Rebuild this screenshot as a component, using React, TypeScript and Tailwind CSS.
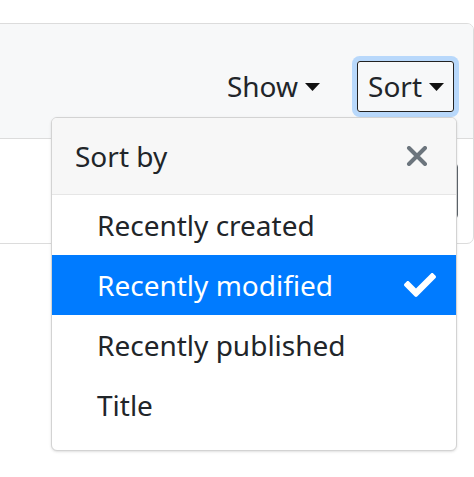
import React from "react";

const font = { fontFamily: '"Noto Sans", "Open Sans", Arial, sans-serif' };

const Caret = () => (
  <svg width="15" height="8" viewBox="0 0 15 8" className="ml-[7px] mt-[2px]">
    <path d="M0 0h15L7.5 8z" fill="#111" />
  </svg>
);

const Check = () => (
  <svg width="32" height="26" viewBox="0 0 512 400" fill="#fff">
    <path d="M173.9 383.4l-166.4-166.4c-10-10-10-26.2 0-36.2l36.2-36.2c10-10 26.2-10 36.2 0L192 256.7 432.1 16.6c10-10 26.2-10 36.2 0l36.2 36.2c10 10 10 26.2 0 36.2l-294.4 294.4c-10 10-26.2 10-36.2 0z" />
  </svg>
);

const Close = () => (
  <svg width="22" height="20" viewBox="0 0 22 20">
    <path d="M3 2l16 16M19 2L3 18" stroke="#6c757d" strokeWidth="4" strokeLinecap="round" />
  </svg>
);

const options = ["Recently created", "Recently modified", "Recently published", "Title"];

export default function App() {
  const active = "Recently modified";

  return (
    <div className="relative w-[474px] h-[477px] bg-white overflow-hidden text-[#212529]" style={font}>
      <div className="mt-[23px] -ml-[10px] w-[484px] border border-[#dcdcdc] rounded-[7px] overflow-hidden">
        <div className="h-[115px] bg-[#f7f8f9] border-b border-[#dcdcdc] flex items-center justify-end pr-[19px] pt-[10px]">
          <button className="flex items-center text-[28px] px-[12px] h-[50px] mr-[25px] leading-none">
            Show
            <Caret />
          </button>
          <button className="flex items-center text-[28px] pl-[10px] pr-[9px] h-[51px] border-[1.5px] border-[#222] rounded-[3px] ring-[5px] ring-[#b8d8fb] leading-none">
            Sort
            <Caret />
          </button>
        </div>
        <div className="h-[104px] flex justify-end pt-[24px] pr-[15px]">
          <div className="w-[200px] h-[56px] border-[1.5px] border-[#5f666d] rounded-[4px]" />
        </div>
      </div>

      <div className="absolute left-[51px] top-[117px] w-[406px] bg-white border border-[#d3d3d3] rounded-[6px] overflow-hidden pb-[15px] shadow-sm">
        <div className="h-[77px] bg-[#f7f7f7] border-b border-[#e6e6e6] flex items-center justify-between pl-[23px] pr-[28px]">
          <span className="text-[28px]">Sort by</span>
          <Close />
        </div>
        {options.map((o) => (
          <div
            key={o}
            className={
              o === active
                ? "h-[60px] flex items-center justify-between pl-[45px] pr-[20px] text-[28px] bg-[#007bff] text-white"
                : "h-[60px] flex items-center pl-[45px] text-[28px]"
            }
          >
            <span>{o}</span>
            {o === active && <Check />}
          </div>
        ))}
      </div>
    </div>
  );
}
